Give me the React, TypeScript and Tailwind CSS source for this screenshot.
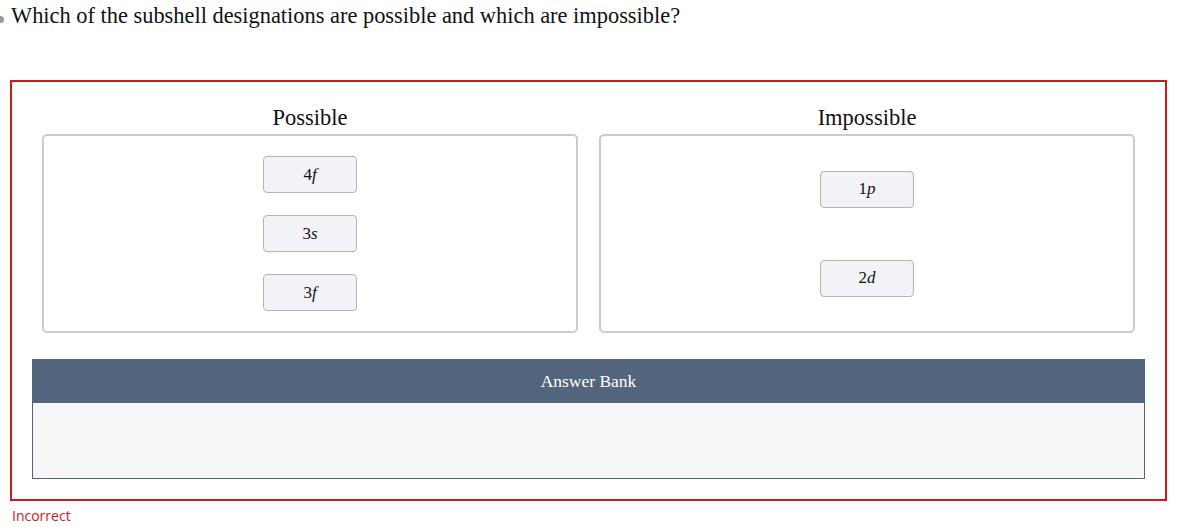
import React from "react";

type Chip = { num: string; letter: string };

const possible: Chip[] = [
  { num: "4", letter: "f" },
  { num: "3", letter: "s" },
  { num: "3", letter: "f" },
];

const impossible: Chip[] = [
  { num: "1", letter: "p" },
  { num: "2", letter: "d" },
];

function Token({ chip }: { chip: Chip }) {
  return (
    <div className="flex h-[37px] w-[94px] items-center justify-center rounded-[4px] border border-[#b4b4b4] bg-[#f2f3f6] text-[17px] text-[#111]">
      <span>{chip.num}</span>
      <span className="italic">{chip.letter}</span>
    </div>
  );
}

function DropZone({ title, chips, gap }: { title: string; chips: Chip[]; gap: string }) {
  return (
    <div className="flex flex-col">
      <h3 className="mb-[2px] text-center text-[22.5px] leading-[28px] text-[#111]">{title}</h3>
      <div className={`flex h-[199px] flex-col items-center justify-center rounded-[5px] border-2 border-[#cccccc] bg-white ${gap}`}>
        {chips.map((c, i) => (
          <Token key={i} chip={c} />
        ))}
      </div>
    </div>
  );
}

export default function App() {
  return (
    <div className="relative h-[527px] w-[1180px] overflow-hidden bg-white font-['Liberation_Serif',serif] text-black">
      {/* cut-off marker at the left edge */}
      <span className="absolute left-[-3px] top-[16px] h-[7px] w-[7px] rounded-full bg-[#9a9a9a]" />

      <p className="pl-[11px] pt-[2px] text-[22.4px] leading-[28px] text-[#111]">
        Which of the subshell designations are possible and which are impossible?
      </p>

      <div className="ml-[10px] mt-[50px] w-[1157px] border-2 border-[#d0181f] pb-[20px] pt-[22px]">
        <div className="grid grid-cols-2 gap-[21px] px-[30px]">
          <DropZone title="Possible" chips={possible} gap="gap-[22px]" />
          <DropZone title="Impossible" chips={impossible} gap="gap-[52px]" />
        </div>

        {/* Answer Bank */}
        <div className="mx-[20px] mt-[26px] border border-[#52657d]">
          <div className="flex h-[43px] items-center justify-center bg-[#52657d] text-[17.5px] text-white">
            Answer Bank
          </div>
          <div className="h-[75px] bg-[#f7f7f7]" />
        </div>
      </div>

      <div className="pl-[12px] pt-[5px] font-['Open_Sans',sans-serif] text-[14px] leading-[19px] text-[#d0181f]">
        Incorrect
      </div>
    </div>
  );
}
